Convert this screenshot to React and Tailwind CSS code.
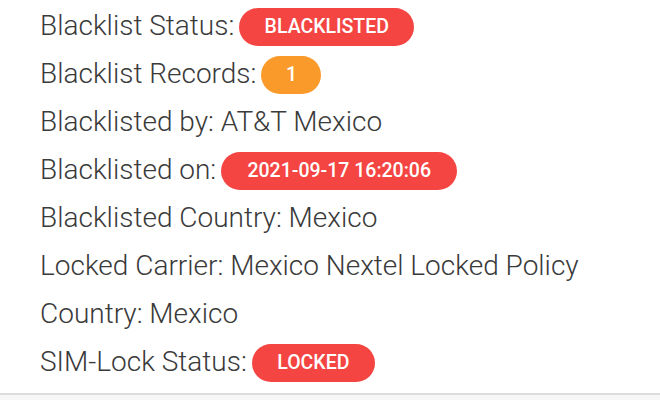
export default function App() {
  const rows = [
    { label: "Blacklist Status:", badge: { text: "BLACKLISTED", tone: "red", w: "w-[175px]" } },
    { label: "Blacklist Records:", badge: { text: "1", tone: "orange", w: "w-[60px]" } },
    { label: "Blacklisted by: AT&T Mexico" },
    { label: "Blacklisted on:", badge: { text: "2021-09-17 16:20:06", tone: "red", w: "w-[236px]" } },
    { label: "Blacklisted Country: Mexico" },
    { label: "Locked Carrier: Mexico Nextel Locked Policy" },
    { label: "Country: Mexico" },
    { label: "SIM-Lock Status:", badge: { text: "LOCKED", tone: "red", w: "w-[123px]" } },
  ];

  return (
    <div className="w-[660px] h-[400px] flex flex-col bg-white">
      <div className="flex-1 flex flex-col pl-10 pt-[2px]">
        {rows.map((r) => (
          <div key={r.label} className="h-[48px] flex items-center gap-[5px]">
            <span className="text-[28px] font-light text-[#3a3a3a] leading-none font-['Roboto_Light','Roboto',sans-serif]">
              {r.label}
            </span>
            {r.badge && (
              <span
                className={`${r.badge.w} h-[38px] mt-[2px] rounded-full flex items-center justify-center text-white text-[19.5px] font-medium font-['Roboto',sans-serif] ${
                  r.badge.tone === "red" ? "bg-[#f44542]" : "bg-[#f99a2a]"
                }`}
              >
                {r.badge.text}
              </span>
            )}
          </div>
        ))}
      </div>
      <div className="h-[2px] bg-[#dddddd]" />
      <div className="h-[5px] bg-[#f7f7f7]" />
    </div>
  );
}
